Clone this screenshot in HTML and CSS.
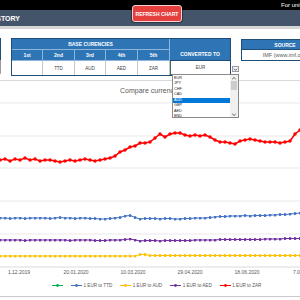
FILE: index.html
```html
<!DOCTYPE html>
<html>
<head>
<meta charset="utf-8">
<link rel="stylesheet" href="styles.css">
</head>
<body>
<div class="sheet">
  <div class="topbar"><span class="note">For unit conversion click here</span></div>
  <div class="titlebar"><span class="title">CURRENCY HISTORY</span></div>
  <button class="refresh">REFRESH CHART</button>
  <div class="strip"></div>

  <div class="tables">
    <div class="frag">
      <div class="frag-head"></div>
      <div class="frag-cell"></div>
    </div>
    <div class="main-table">
      <div class="th th-span">BASE CURENCIES</div>
      <div class="th th-conv">CONVERTED TO</div>
      <div class="th">1st</div>
      <div class="th">2nd</div>
      <div class="th">3rd</div>
      <div class="th">4th</div>
      <div class="th">5th</div>
      <div class="td"></div>
      <div class="td">TTD</div>
      <div class="td">AUD</div>
      <div class="td">AED</div>
      <div class="td">ZAR</div>
      <div class="td td-sel">EUR</div>
    </div>
    <div class="dd-btn"><svg width="5" height="5" viewBox="0 0 5 5"><path d="M1 1.8 L2.5 3.3 L4 1.8" fill="none" stroke="#333" stroke-width="0.8"/></svg></div>
    <div class="source-table">
      <div class="th src-head">SOURCE</div>
      <div class="td src-cell">IMF (www.imf.org)</div>
    </div>
  </div>

  <div class="chart">
    <div class="chart-title">Compare currencies to EUR</div>
    <svg class="plot" width="300" height="178" viewBox="0 0 300 178">
      <defs>
        <marker id="mr" viewBox="0 0 4 4" refX="2" refY="2" markerWidth="3.4" markerHeight="3.4" markerUnits="userSpaceOnUse"><circle cx="2" cy="2" r="2" fill="#ff0000"/></marker>
        <marker id="mb" viewBox="0 0 4 4" refX="2" refY="2" markerWidth="3" markerHeight="3" markerUnits="userSpaceOnUse"><circle cx="2" cy="2" r="2" fill="#4472c4"/></marker>
        <marker id="mp" viewBox="0 0 4 4" refX="2" refY="2" markerWidth="3" markerHeight="3" markerUnits="userSpaceOnUse"><circle cx="2" cy="2" r="2" fill="#7030a0"/></marker>
        <marker id="my" viewBox="0 0 4 4" refX="2" refY="2" markerWidth="3" markerHeight="3" markerUnits="userSpaceOnUse"><circle cx="2" cy="2" r="2" fill="#ffc000"/></marker>
      </defs>
      <g stroke="#e3e3e3" stroke-width="0.8">
        <line x1="0" y1="2" x2="300" y2="2"/>
        <line x1="0" y1="35" x2="300" y2="35"/>
        <line x1="0" y1="67" x2="300" y2="67"/>
        <line x1="0" y1="100" x2="300" y2="100"/>
        <line x1="0" y1="133" x2="300" y2="133"/>
        <line x1="0" y1="166" x2="300" y2="166" stroke="#d0d0d0"/>
      </g>
      <polyline class="s-red" marker-start="url(#mr)" marker-mid="url(#mr)" marker-end="url(#mr)" points="0,59 5,58 10,60 15,58 20,59 25,57 30,59 35,58 40,60 45,59 50,59 55,60 60,61 65,60 70,59 75,60 80,59 85,58 90,59 95,60 100,59 105,58 110,57 115,55 120,51 125,49 130,46 135,45 140,42 145,42 150,41 155,37 160,33 165,36 170,33 175,32 180,32 185,34 190,35 195,34 200,35 205,34 210,36 215,39 220,41 225,41 230,42 235,43 240,40 245,39 250,38 255,39 260,40 265,41 270,41 275,41 280,42 285,41 290,40 295,33 300,29"/>
      <polyline class="s-blue" marker-start="url(#mb)" marker-mid="url(#mb)" marker-end="url(#mb)" points="0,117 5,117 10,117.5 15,117 20,117 25,117.5 30,117 35,117 40,117 45,117 50,117.5 55,117 60,116.5 65,117 70,117 75,117.5 80,117 85,117 90,117.5 95,117.5 100,118 105,118 110,117.5 115,117 120,116.5 125,115 130,114.5 135,116.5 140,118 145,117.5 150,117.5 155,117.5 160,118 165,117.5 170,117.5 175,118 180,118 185,117.5 190,117.5 195,117 200,117 205,117 210,116.5 215,116 220,115.5 225,115.5 230,115 235,115 240,115 245,114.5 250,115 255,114.5 260,114.5 265,114.5 270,114 275,114 280,113.5 285,113.5 290,113 295,112.5 300,112"/>
      <polyline class="s-purple" marker-start="url(#mp)" marker-mid="url(#mp)" marker-end="url(#mp)" points="0,139 5,139 10,139 15,139 20,139 25,139.5 30,139 35,139 40,139 45,139 50,139 55,139 60,139 65,139 70,139.5 75,139 80,139 85,139 90,139 95,139.5 100,139.5 105,139.5 110,139 115,139 120,139 125,138.5 130,138 135,139 140,140 145,139.5 150,139.5 155,139.5 160,140 165,139.5 170,139.5 175,139.5 180,139.5 185,139.5 190,139.5 195,139 200,139 205,139 210,139 215,139 220,138.5 225,138.5 230,138.5 235,138.5 240,138.5 245,138.5 250,138.5 255,138.5 260,138.5 265,138 270,138 275,138 280,138 285,137.5 290,137.5 295,137.5 300,137.5"/>
      <polyline class="s-yellow" marker-start="url(#my)" marker-mid="url(#my)" marker-end="url(#my)" points="0,155 5,155 10,155 15,155 20,155 25,155 30,155 35,155 40,155 45,155 50,155 55,155 60,155 65,155 70,155 75,155 80,155 85,155 90,155 95,155 100,155 105,155 110,155 115,155 120,155 125,155 130,155 135,155 140,153.5 145,153.5 150,154.5 155,154.5 160,154.5 165,154.5 170,154.5 175,154.5 180,154.5 185,154.5 190,154.5 195,154.5 200,154.5 205,154.5 210,154.5 215,154.5 220,154.5 225,154.5 230,154.5 235,154.5 240,154.5 245,154.5 250,154.5 255,154.5 260,154.5 265,154.5 270,154.5 275,154.5 280,154.5 285,154.5 290,154.5 295,154.5 300,154.5"/>
      <g class="xlabels">
        <text x="19" y="173">1.12.2019</text>
        <text x="76" y="173">20.01.2020</text>
        <text x="133" y="173">10.03.2020</text>
        <text x="190" y="173">29.04.2020</text>
        <text x="247" y="173">18.06.2020</text>
        <text x="304" y="173">7.08.2020</text>
      </g>
    </svg>
    <div class="legend">
      <div class="lg-item">
        <svg width="11" height="5" viewBox="0 0 11 5"><line x1="0" y1="2.5" x2="11" y2="2.5" stroke="#00b050" stroke-width="1"/><circle cx="5.5" cy="2.5" r="1.4" fill="#00b050"/></svg>
      </div>
      <div class="lg-item">
        <svg width="11" height="5" viewBox="0 0 11 5"><line x1="0" y1="2.5" x2="11" y2="2.5" stroke="#4472c4" stroke-width="1"/><circle cx="5.5" cy="2.5" r="1.4" fill="#4472c4"/></svg>
        <span>1 EUR to TTD</span>
      </div>
      <div class="lg-item">
        <svg width="11" height="5" viewBox="0 0 11 5"><line x1="0" y1="2.5" x2="11" y2="2.5" stroke="#ffc000" stroke-width="1"/><circle cx="5.5" cy="2.5" r="1.4" fill="#ffc000"/></svg>
        <span>1 EUR to AUD</span>
      </div>
      <div class="lg-item">
        <svg width="11" height="5" viewBox="0 0 11 5"><line x1="0" y1="2.5" x2="11" y2="2.5" stroke="#7030a0" stroke-width="1"/><circle cx="5.5" cy="2.5" r="1.4" fill="#7030a0"/></svg>
        <span>1 EUR to AED</span>
      </div>
      <div class="lg-item">
        <svg width="11" height="5" viewBox="0 0 11 5"><line x1="0" y1="2.5" x2="11" y2="2.5" stroke="#ff0000" stroke-width="1"/><circle cx="5.5" cy="2.5" r="1.4" fill="#ff0000"/></svg>
        <span>1 EUR to ZAR</span>
      </div>
    </div>
  </div>

  <div class="dropdown">
    <ul class="dd-list">
      <li>EUR</li>
      <li>JPY</li>
      <li>CHF</li>
      <li>CAD</li>
      <li class="dd-selected">AUD</li>
      <li>GBP</li>
      <li>AED</li>
      <li>BND</li>
    </ul>
    <div class="dd-scroll">
      <svg class="dd-arrow" width="6" height="5" viewBox="0 0 6 5"><path d="M1.2 3.2 L3 1.5 L4.8 3.2" fill="none" stroke="#444" stroke-width="0.8"/></svg>
      <div class="dd-thumb"></div>
      <div class="dd-space"></div>
      <svg class="dd-arrow" width="6" height="5" viewBox="0 0 6 5"><path d="M1.2 1.8 L3 3.5 L4.8 1.8" fill="none" stroke="#444" stroke-width="0.8"/></svg>
    </div>
  </div>
</div>
</body>
</html>
```
FILE: styles.css
```css
* { box-sizing: border-box; margin: 0; padding: 0; }
html, body { width: 300px; height: 300px; overflow: hidden; background: #fff; }
body { font-family: "Liberation Sans", Arial, sans-serif; }

.sheet { position: relative; width: 300px; height: 300px; overflow: hidden; background: #fff; }

.topbar {
  height: 10px; background: #000; color: #fff;
  font-size: 6px; line-height: 10px; white-space: nowrap;
  padding-left: 281px;
}
.titlebar {
  height: 16px; background: #44546a;
  display: flex; align-items: center;
}
.title {
  width: 20px; overflow: hidden; white-space: nowrap;
  direction: rtl; text-align: right;
  color: #fff; font-weight: bold; font-size: 7px; line-height: 9px;
}
.refresh {
  position: absolute; left: 132px; top: 5px; width: 50px; height: 17px;
  background: #e5403e; color: #fff;
  border: 1px solid #f7d0cf; border-radius: 3px;
  box-shadow: 0 0 1px 1px rgba(0,0,0,0.35);
  font-family: "Liberation Sans", Arial, sans-serif;
  font-weight: bold; font-size: 5px; letter-spacing: 0;
  display: flex; align-items: center; justify-content: center;
}
.strip { height: 3px; background: #d6d6d6; }

.tables {
  margin-top: 9px;
  display: flex; align-items: flex-start;
  height: 36px;
}
.frag { width: 4px; display: flex; flex-direction: column; }
.frag-head { height: 22px; background: #2e75b6; border: 1px solid #1f4e79; border-left: none; }
.frag-cell { height: 14px; border-right: 1px solid #9a9a9a; border-bottom: 1px solid #bfbfbf; }

.main-table {
  margin-left: 10px;
  display: grid;
  grid-template-columns: 31px 32px 31px 32px 32px 60px;
  grid-template-rows: 11px 11px 14px;
  border: 1px solid #1f4e79;
}
.th {
  background: #2e75b6; color: #fff; font-weight: bold; font-size: 5px;
  display: flex; align-items: center; justify-content: center;
  border-right: 1px solid #8fb4da; border-bottom: 1px solid #8fb4da;
  white-space: nowrap;
}
.th-span { grid-column: 1 / 6; }
.th-conv { grid-column: 6; grid-row: 1 / 3; align-items: flex-end; padding-bottom: 3px; border-right: none; border-bottom: 1px solid #1f4e79; }
.td {
  background: #fff; color: #404040; font-size: 4.5px;
  display: flex; align-items: center; justify-content: center;
  border-right: 1px solid #c8c8c8;
  white-space: nowrap;
}
.td-sel { border: 1px solid #3b6e4d; border-top: none; border-right: none; }

.dd-btn {
  align-self: flex-end; margin-bottom: 2px;
  margin-left: 1px; margin-right: 2px;
  width: 7px; height: 6px;
  background: #f2f2f2; border: 1px solid #9a9a9a;
  display: flex; align-items: center; justify-content: center;
}
.source-table {
  margin-top: 1px;
  flex: 0 0 88px;
  display: grid; grid-template-rows: 9px 11px;
  border: 1px solid #1f4e79;
}
.src-head { border-right: none; border-bottom: none; }
.src-cell { border-right: none; border-top: 1px solid #1f4e79; color: #595959; font-size: 5.5px; }

.chart {
  margin-top: 6px;
  border-top: 1px solid #d9d9d9;
  border-bottom: 1px solid #c9c9c9;
  height: 217px;
  display: flex; flex-direction: column;
}
.chart-title {
  height: 20px; line-height: 20px;
  padding-left: 120px;
  font-size: 7px; color: #595959; white-space: nowrap;
}
.plot { display: block; flex: none; }
.plot polyline { fill: none; }
.s-red { stroke: #ff0000; stroke-width: 1.6; }
.s-blue { stroke: #4472c4; stroke-width: 1; }
.s-purple { stroke: #7030a0; stroke-width: 1; }
.s-yellow { stroke: #ffc000; stroke-width: 1; }
.xlabels text { font-family: "Liberation Sans", Arial, sans-serif; font-size: 5px; fill: #595959; text-anchor: middle; }

.legend {
  height: 12px;
  display: flex; align-items: center; gap: 8px;
  padding-left: 52px;
  font-size: 4.6px; color: #595959; white-space: nowrap;
}
.lg-item { display: flex; align-items: center; gap: 1.5px; }
.lg-item svg { display: block; }

.dropdown {
  position: absolute; left: 172px; top: 74px;
  width: 67px; height: 44px;
  background: #fff; border: 1px solid #8a8a8a;
  display: flex;
}
.dd-list { list-style: none; flex: 1; padding-top: 0.5px; }
.dd-list li {
  height: 5.5px; line-height: 5.5px;
  font-size: 3.8px; color: #222; padding-left: 1px;
}
.dd-selected { background: #0078d7; color: #fff !important; }
.dd-scroll {
  width: 8px; background: #f0f0f0;
  display: flex; flex-direction: column; align-items: center;
}
.dd-arrow { display: block; margin-top: 0.5px; }
.dd-thumb { width: 6px; height: 9px; background: #cdcdcd; }
.dd-space { flex: 1; }
```
